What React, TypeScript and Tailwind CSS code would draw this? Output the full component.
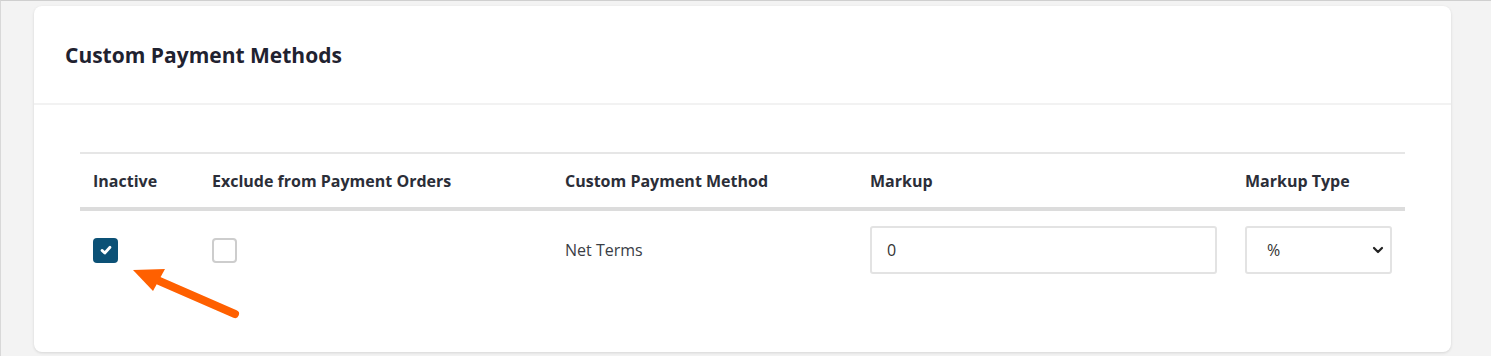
import React from "react";

export default function App() {
  return (
    <div className="w-[1491px] h-[356px] bg-[#f3f3f3] border-t border-t-[#cfcfcf] border-l border-l-[#d8d8d8] pl-[33px] pr-[40px] pt-[5px] overflow-hidden" style={{ fontFamily: "'Open Sans', Lato, sans-serif" }}>
      <div className="relative bg-white rounded-[8px] shadow-[0_1px_3px_rgba(0,0,0,0.12)] h-[346px]">
        <div className="h-[99px] flex items-center px-[31px] border-b-2 border-b-[#f2f2f2]">
          <h2 className="text-[21px] font-bold text-[#1f2230] pt-[2px]">Custom Payment Methods</h2>
        </div>
        <div className="px-[46px] pt-[47px]">
          <table className="w-full border-collapse text-[#2b2e38]">
            <thead>
              <tr className="border-t-2 border-t-[#e6e6e6] border-b-4 border-b-[#dcdcdc]">
                <th className="w-[119px] h-[56px] text-left pl-[13px] text-[16px] font-bold">Inactive</th>
                <th className="w-[353px] text-left pl-[13px] text-[16px] font-bold">Exclude from Payment Orders</th>
                <th className="w-[305px] text-left pl-[13px] text-[16px] font-bold">Custom Payment Method</th>
                <th className="w-[375px] text-left pl-[13px] text-[16px] font-bold">Markup</th>
                <th className="text-left pl-[13px] text-[16px] font-bold">Markup Type</th>
              </tr>
            </thead>
            <tbody>
              <tr>
                <td className="pl-[13px] h-[79px] pt-[1px]">
                  <div className="w-[25px] h-[25px] rounded-[4px] bg-[#0c5176] flex items-center justify-center">
                    <svg width="14" height="14" viewBox="0 0 14 14">
                      <path d="M3 7.4 L5.8 10 L11 4.2" fill="none" stroke="white" strokeWidth="2.8" strokeLinecap="round" strokeLinejoin="round" />
                    </svg>
                  </div>
                </td>
                <td className="pl-[13px] pt-[1px]">
                  <div className="w-[25px] h-[25px] rounded-[4px] border-2 border-[#cdcdcd] bg-white" />
                </td>
                <td className="pl-[13px] text-[16px] text-[#3a3d45]">Net Terms</td>
                <td className="pl-[13px]">
                  <div className="w-[347px] h-[48px] border-2 border-[#e3e3e3] rounded-[3px] flex items-center px-[15px] text-[16px] text-[#333]">0</div>
                </td>
                <td className="pl-[13px]">
                  <div className="w-[147px] h-[48px] border-2 border-[#e3e3e3] rounded-[3px] flex items-center justify-between pl-[20px] pr-[6px] text-[16px] text-[#333]">
                    <span>%</span>
                    <svg width="12" height="8" viewBox="0 0 12 8">
                      <path d="M2 2 L6 6 L10 2" fill="none" stroke="#222" strokeWidth="2.2" strokeLinecap="round" strokeLinejoin="round" />
                    </svg>
                  </div>
                </td>
              </tr>
            </tbody>
          </table>
        </div>
        <svg className="absolute left-0 top-0 pointer-events-none" width="300" height="346" viewBox="0 0 300 346">
          <g transform="translate(-34 -6)">
            <line x1="235" y1="314" x2="157" y2="280" stroke="#ff6000" strokeWidth="8" strokeLinecap="round" />
            <polygon points="133,270 165,269 153,291" fill="#ff6000" />
          </g>
        </svg>
      </div>
    </div>
  );
}
